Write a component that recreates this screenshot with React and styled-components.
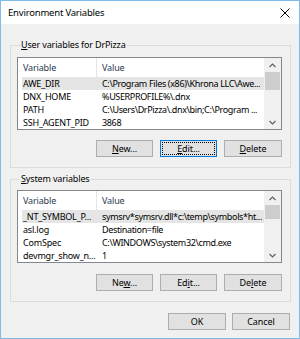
import React from "react";
import styled, { createGlobalStyle, css } from "styled-components";

const Global = createGlobalStyle`
  html, body { margin: 0; padding: 0; background: #ffffff; }
  * { box-sizing: border-box; }
`;

const FONT = `"Noto Sans", "Open Sans", "Liberation Sans", sans-serif`;

const Window = styled.div`
  width: 300px;
  height: 339px;
  border: 1px solid #7fbbe8;
  background: #f0f0f0;
  font-family: ${FONT};
  font-size: 9px;
  color: #000;
  display: flex;
  flex-direction: column;
`;

const TitleBar = styled.div`
  height: 23px;
  background: #ffffff;
  display: flex;
  align-items: center;
  justify-content: space-between;
  padding: 0 7px 0 7px;
`;

const Title = styled.span`
  font-size: 9.5px;
  line-height: 12px;
  padding-top: 1px;
  letter-spacing: -0.2px;
`;

const CloseBox = styled.div`
  width: 14px;
  height: 14px;
  display: flex;
  align-items: center;
  justify-content: center;
  margin-top: 1px;
`;

const Body = styled.div`
  flex: 1;
  display: flex;
  flex-direction: column;
  padding: 15px 8px 0 9px;
`;

const Group = styled.fieldset`
  margin: 0 0 ${(p) => p.$gapAfter}px 0;
  padding: 0 8px 10px 6px;
  border: 1px solid #dcdcdc;
  min-width: 0;
  display: flex;
  flex-direction: column;
`;

const Legend = styled.legend`
  font-size: 9px;
  line-height: 12px;
  padding: 0 1px;
  margin-left: 3px;
  letter-spacing: -0.15px;
`;

const ListFrame = styled.div`
  margin-top: ${(p) => p.$top}px;
  height: 73px;
  border: 1px solid #828790;
  background: #ffffff;
  display: grid;
  grid-template-columns: 1fr 17px;
  overflow: hidden;
`;

const ListContent = styled.div`
  display: flex;
  flex-direction: column;
  min-width: 0;
`;

const Header = styled.div`
  height: 19px;
  display: grid;
  grid-template-columns: 79px 1fr;
  flex: none;
`;

const HeaderCell = styled.div`
  display: flex;
  align-items: center;
  padding-left: 5px;
  color: #2a3b52;
  white-space: nowrap;
  overflow: hidden;
  letter-spacing: -0.15px;
  ${(p) =>
    p.$divider &&
    css`
      border-right: 1px solid #e5e5e5;
    `}
`;

const Row = styled.div`
  height: 13px;
  margin-left: 4px;
  display: grid;
  grid-template-columns: 75px 1fr;
  align-items: center;
  background: ${(p) => (p.$selected ? "#e5e5e5" : "transparent")};
  flex: none;
`;

const Cell = styled.div`
  padding-left: ${(p) => (p.$first ? 1 : 5)}px;
  white-space: nowrap;
  overflow: hidden;
  line-height: 13px;
  letter-spacing: ${(p) => (p.$first ? -0.2 : -0.35)}px;
`;

const ScrollBar = styled.div`
  background: #f0f0f0;
  display: flex;
  flex-direction: column;
`;

const Arrow = styled.div`
  height: 14px;
  flex: none;
  display: flex;
  align-items: center;
  justify-content: center;
`;

const Track = styled.div`
  flex: 1;
  display: flex;
  flex-direction: column;
`;

const Thumb = styled.div`
  height: ${(p) => p.$h}px;
  margin: 0 1px;
  background: #cdcdcd;
`;

const ButtonRow = styled.div`
  margin-top: ${(p) => p.$top}px;
  display: flex;
  justify-content: flex-end;
  gap: 7px;
`;

const Button = styled.button`
  width: ${(p) => p.$w || 57}px;
  height: 17px;
  padding: 0;
  margin: 0;
  font-family: ${FONT};
  font-size: 9px;
  letter-spacing: -0.1px;
  color: #000;
  background: #e1e1e1;
  border: 1px solid ${(p) => (p.$focused ? "#0078d7" : "#adadad")};
  display: flex;
  align-items: center;
  justify-content: center;
  position: relative;
  ${(p) =>
    p.$focused &&
    css`
      &::after {
        content: "";
        position: absolute;
        inset: 1px;
        border: 1px dotted #000;
      }
    `}
`;

const DialogButtons = styled.div`
  margin-top: 11px;
  display: flex;
  justify-content: flex-end;
  gap: 6px;
  padding-right: 1px;
`;

const Chevron = ({ down }) => (
  <svg width="7" height="5" viewBox="0 0 7 5">
    <polyline
      points={down ? "0.5,1 3.5,4 6.5,1" : "0.5,4 3.5,1 6.5,4"}
      fill="none"
      stroke="#606060"
      strokeWidth="1.2"
    />
  </svg>
);

const VarList = ({ rows, top, thumbH }) => (
  <ListFrame $top={top}>
    <ListContent>
      <Header>
        <HeaderCell $divider>Variable</HeaderCell>
        <HeaderCell>Value</HeaderCell>
      </Header>
      {rows.map((r, i) => (
        <Row key={i} $selected={i === 0}>
          <Cell $first>{r[0]}</Cell>
          <Cell>{r[1]}</Cell>
        </Row>
      ))}
    </ListContent>
    <ScrollBar>
      <Arrow>
        <Chevron />
      </Arrow>
      <Track>
        <Thumb $h={thumbH} />
      </Track>
      <Arrow>
        <Chevron down />
      </Arrow>
    </ScrollBar>
  </ListFrame>
);

const userRows = [
  ["AWE_DIR", "C:\\Program Files (x86)\\Khrona LLC\\Awe..."],
  ["DNX_HOME", "%USERPROFILE%\\.dnx"],
  ["PATH", "C:\\Users\\DrPizza\\.dnx\\bin;C:\\Program ..."],
  ["SSH_AGENT_PID", "3868"],
];

const sysRows = [
  ["_NT_SYMBOL_P...", "symsrv*symsrv.dll*c:\\temp\\symbols*ht..."],
  ["asl.log", "Destination=file"],
  ["ComSpec", "C:\\WINDOWS\\system32\\cmd.exe"],
  ["devmgr_show_n...", "1"],
];

export default function App() {
  return (
    <>
      <Global />
      <Window>
        <TitleBar>
          <Title>Environment Variables</Title>
          <CloseBox>
            <svg width="10" height="10" viewBox="0 0 10 10">
              <path d="M0.5 0.5 L9.5 9.5 M9.5 0.5 L0.5 9.5" stroke="#000" strokeWidth="1" />
            </svg>
          </CloseBox>
        </TitleBar>
        <Body>
          <Group $gapAfter={5}>
            <Legend>
              <u>U</u>ser variables for DrPizza
            </Legend>
            <VarList rows={userRows} top={6} thumbH={18} />
            <ButtonRow $top={10}>
              <Button $w={57}>
                <span><u>N</u>ew...</span>
              </Button>
              <Button $w={57} $focused>
                <span><u>E</u>dit...</span>
              </Button>
              <Button $w={58}>
                <span><u>D</u>elete</span>
              </Button>
            </ButtonRow>
          </Group>
          <Group $gapAfter={0}>
            <Legend>
              <u>S</u>ystem variables
            </Legend>
            <VarList rows={sysRows} top={5} thumbH={14} />
            <ButtonRow $top={11}>
              <Button $w={57}>
                <span>Ne<u>w</u>...</span>
              </Button>
              <Button $w={57}>
                <span>Ed<u>i</u>t...</span>
              </Button>
              <Button $w={58}>
                <span>De<u>l</u>ete</span>
              </Button>
            </ButtonRow>
          </Group>
          <DialogButtons>
            <Button $w={58}>OK</Button>
            <Button $w={58}>Cancel</Button>
          </DialogButtons>
        </Body>
      </Window>
    </>
  );
}
